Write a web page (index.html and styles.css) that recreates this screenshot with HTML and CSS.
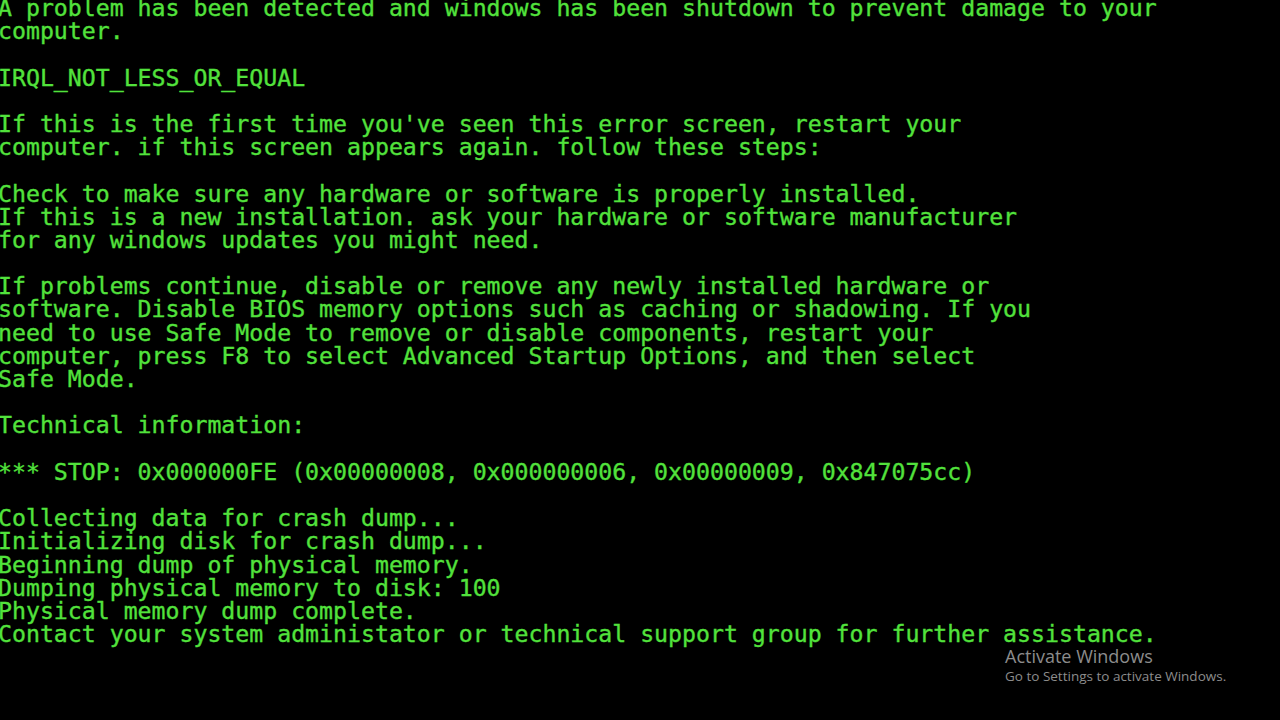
FILE: index.html
```html
<!DOCTYPE html>
<html>
<head>
<meta charset="utf-8">
<link rel="stylesheet" href="styles.css">
</head>
<body>
<pre class="screen">A problem has been detected and windows has been shutdown to prevent damage to your
computer.

IRQL_NOT_LESS_OR_EQUAL

If this is the first time you've seen this error screen, restart your
computer. if this screen appears again. follow these steps:

Check to make sure any hardware or software is properly installed.
If this is a new installation. ask your hardware or software manufacturer
for any windows updates you might need.

If problems continue, disable or remove any newly installed hardware or
software. Disable BIOS memory options such as caching or shadowing. If you
need to use Safe Mode to remove or disable components, restart your
computer, press F8 to select Advanced Startup Options, and then select
Safe Mode.

Technical information:

*** STOP: 0x000000FE (0x00000008, 0x000000006, 0x00000009, 0x847075cc)

Collecting data for crash dump...
Initializing disk for crash dump...
Beginning dump of physical memory.
Dumping physical memory to disk: 100
Physical memory dump complete.
Contact your system administator or technical support group for further assistance.</pre>
<div class="watermark">
  <div class="wm-title">Activate Windows</div>
  <div class="wm-sub">Go to Settings to activate Windows.</div>
</div>
</body>
</html>
```
FILE: styles.css
```css
html, body {
  margin: 0;
  padding: 0;
  background: #000;
  width: 1280px;
  height: 720px;
  overflow: hidden;
}
.screen {
  margin: -4px 0 0 -2px;
  font-family: "DejaVu Sans Mono", "Liberation Mono", monospace;
  font-size: 23.2px;
  line-height: 23.19px;
  color: #52e23c;
  -webkit-text-stroke: 0.35px #52e23c;
  white-space: pre;
}
.watermark {
  position: absolute;
  left: 1005px;
  top: 646px;
  font-family: "Open Sans", "Noto Sans", sans-serif;
  color: #8c8c8c;
}
.wm-title {
  font-size: 18px;
  line-height: 21px;
}
.wm-sub {
  font-size: 13.5px;
  line-height: 19px;
}
```
